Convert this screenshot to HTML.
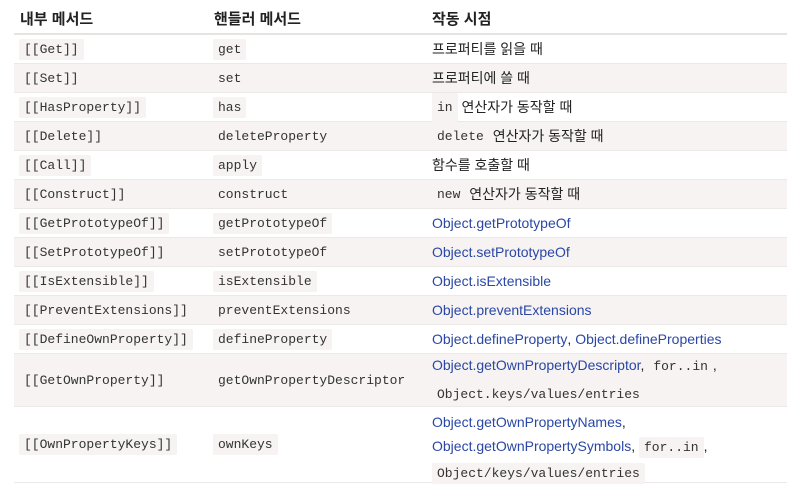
<!DOCTYPE html>
<html><head><meta charset="utf-8"><style>
*{margin:0;padding:0;box-sizing:border-box}
body{width:800px;height:495px;background:#fff;position:relative;overflow:hidden;font-family:"Liberation Sans","Noto Sans CJK KR",sans-serif;color:#222;font-size:14px}
.r{position:absolute;left:14px;width:773px;border-bottom:1px solid #ebe8e6}
.s{background:#f6f3f2}
.c{position:absolute;top:0;bottom:0;display:flex;align-items:center;white-space:nowrap}
.c1{left:5px}.c2{left:199px}.c3{left:418px;flex-wrap:wrap;white-space:normal;width:350px;align-content:center;line-height:23px}
code{font-family:"Liberation Mono",monospace;font-size:13px;color:#333;background:#f6f3f2;padding:3px 5px;border-radius:2px}
.s code{background:none}
a{color:#2a47a5;text-decoration:none}
.h{position:absolute;top:8px;font-size:15px;font-weight:bold;color:#222}
</style></head><body>
<div class="h" style="left:20px">내부 메서드</div>
<div class="h" style="left:214px">핸들러 메서드</div>
<div class="h" style="left:432px">작동 시점</div>
<div style="position:absolute;left:14px;top:33px;width:773px;height:2px;background:#e6e3e1"></div>

<div class="r" style="top:35px;height:29px"><div class="c c1"><code>[[Get]]</code></div><div class="c c2"><code>get</code></div><div class="c c3">프로퍼티를 읽을 때</div></div>
<div class="r s" style="top:64px;height:29px"><div class="c c1"><code>[[Set]]</code></div><div class="c c2"><code>set</code></div><div class="c c3">프로퍼티에 쓸 때</div></div>
<div class="r" style="top:93px;height:29px"><div class="c c1"><code>[[HasProperty]]</code></div><div class="c c2"><code>has</code></div><div class="c c3"><code>in</code>&nbsp;연산자가 동작할 때</div></div>
<div class="r s" style="top:122px;height:29px"><div class="c c1"><code>[[Delete]]</code></div><div class="c c2"><code>deleteProperty</code></div><div class="c c3"><code>delete</code>&nbsp;연산자가 동작할 때</div></div>
<div class="r" style="top:151px;height:29px"><div class="c c1"><code>[[Call]]</code></div><div class="c c2"><code>apply</code></div><div class="c c3">함수를 호출할 때</div></div>
<div class="r s" style="top:180px;height:29px"><div class="c c1"><code>[[Construct]]</code></div><div class="c c2"><code>construct</code></div><div class="c c3"><code>new</code>&nbsp;연산자가 동작할 때</div></div>
<div class="r" style="top:209px;height:29px"><div class="c c1"><code>[[GetPrototypeOf]]</code></div><div class="c c2"><code>getPrototypeOf</code></div><div class="c c3"><a>Object.getPrototypeOf</a></div></div>
<div class="r s" style="top:238px;height:29px"><div class="c c1"><code>[[SetPrototypeOf]]</code></div><div class="c c2"><code>setPrototypeOf</code></div><div class="c c3"><a>Object.setPrototypeOf</a></div></div>
<div class="r" style="top:267px;height:29px"><div class="c c1"><code>[[IsExtensible]]</code></div><div class="c c2"><code>isExtensible</code></div><div class="c c3"><a>Object.isExtensible</a></div></div>
<div class="r s" style="top:296px;height:29px"><div class="c c1"><code>[[PreventExtensions]]</code></div><div class="c c2"><code>preventExtensions</code></div><div class="c c3"><a>Object.preventExtensions</a></div></div>
<div class="r" style="top:325px;height:29px"><div class="c c1"><code>[[DefineOwnProperty]]</code></div><div class="c c2"><code>defineProperty</code></div><div class="c c3"><a>Object.defineProperty</a>,&nbsp;<a>Object.defineProperties</a></div></div>
<div class="r s" style="top:354px;height:53px"><div class="c c1"><code>[[GetOwnProperty]]</code></div><div class="c c2"><code>getOwnPropertyDescriptor</code></div><div class="c c3" style="line-height:26px"><span><a>Object.getOwnPropertyDescriptor</a>, <code>for..in</code>,</span><br><span style="width:100%"><code>Object.keys/values/entries</code></span></div></div>
<div class="r" style="top:407px;height:76px"><div class="c c1"><code>[[OwnPropertyKeys]]</code></div><div class="c c2"><code>ownKeys</code></div><div class="c c3" style="line-height:24px;display:block;top:3px;bottom:auto"><a>Object.getOwnPropertyNames</a>,<br><a>Object.getOwnPropertySymbols</a>, <code>for..in</code>,<br><code>Object/keys/values/entries</code></div></div>
</body></html>
